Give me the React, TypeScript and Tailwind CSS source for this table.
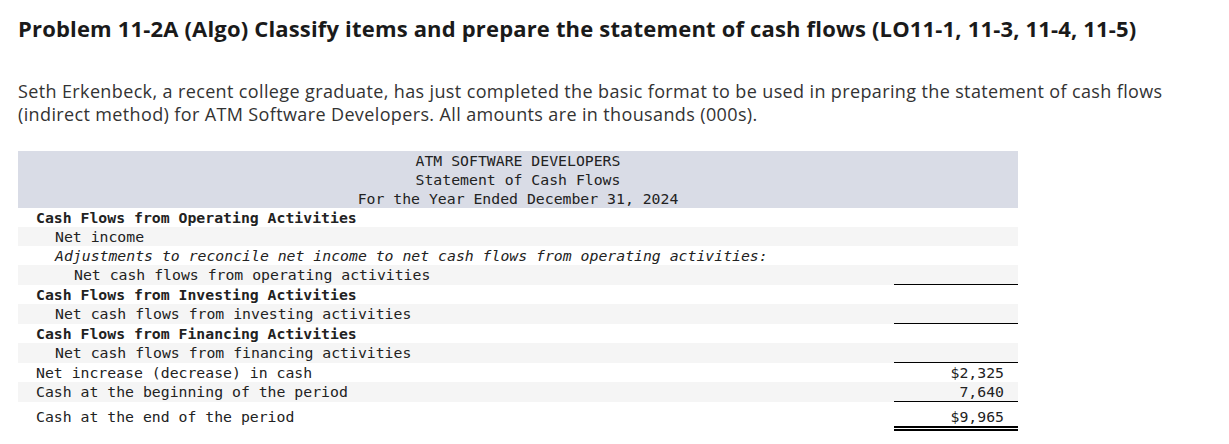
import React from 'react';

interface Row {
  label: string;
  level: number;
  bold?: boolean;
  italic?: boolean;
  amount?: string;
  rule?: 'single' | 'double';
}

const rows: Row[] = [
  { label: 'Cash Flows from Operating Activities', level: 0, bold: true },
  { label: 'Net income', level: 1 },
  { label: 'Adjustments to reconcile net income to net cash flows from operating activities:', level: 1, italic: true },
  { label: 'Net cash flows from operating activities', level: 2, rule: 'single' },
  { label: 'Cash Flows from Investing Activities', level: 0, bold: true },
  { label: 'Net cash flows from investing activities', level: 1, rule: 'single' },
  { label: 'Cash Flows from Financing Activities', level: 0, bold: true },
  { label: 'Net cash flows from financing activities', level: 1, rule: 'single' },
  { label: 'Net increase (decrease) in cash', level: 0, amount: '$2,325' },
  { label: 'Cash at the beginning of the period', level: 0, amount: '7,640', rule: 'single' },
  { label: 'Cash at the end of the period', level: 0, amount: '$9,965', rule: 'double' },
];

const indent = ['pl-[18px]', 'pl-[37px]', 'pl-[56px]'];

const App: React.FC = () => {
  return (
    <div className="w-[1229px] h-[444px] bg-white px-[18px] pt-[14px] text-[#333]">
      <h1 className="font-['Open_Sans','Lato',sans-serif] font-bold text-[22px] tracking-[0.17px] leading-[28px] text-[#1a1a1a]">
        Problem 11-2A (Algo) Classify items and prepare the statement of cash flows (LO11-1, 11-3, 11-4, 11-5)
      </h1>

      <p className="mt-[38px] w-[1180px] font-['Open_Sans','Lato',sans-serif] text-[18px] tracking-[0.37px] leading-[23px] text-[#333]">
        Seth Erkenbeck, a recent college graduate, has just completed the basic format to be used in preparing the statement of cash flows (indirect method) for ATM Software Developers. All amounts are in thousands (000s).
      </p>

      {/* statement */}
      <div className="mt-[25px] w-[1000px] font-['DejaVu_Sans_Mono','Liberation_Mono',monospace] text-[14.8px] text-[#222]">
        <div className="bg-[#d9dce6] h-[57px] flex flex-col items-center justify-center leading-[19px]">
          <div>ATM SOFTWARE DEVELOPERS</div>
          <div>Statement of Cash Flows</div>
          <div>For the Year Ended December 31, 2024</div>
        </div>

        {rows.map((r, i) => {
          const last = r.rule === 'double';
          return (
            <div
              key={i}
              className={`flex ${i % 2 === 1 ? 'bg-[#f5f5f5]' : 'bg-white'} ${last ? 'h-[29px]' : r.rule ? 'h-[20px]' : 'h-[19px]'}`}
            >
              <div
                className={`flex-1 ${indent[r.level]} whitespace-pre ${last ? 'pt-[5px]' : ''} leading-[19px] ${r.bold ? 'font-bold' : ''} ${r.italic ? 'italic' : ''}`}
              >
                {r.label}
              </div>
              <div
                className={`w-[124px] text-right pr-[14px] leading-[19px] ${last ? 'pt-[5px] border-b-[5px] border-double border-black' : ''} ${r.rule === 'single' ? 'border-b border-black' : ''}`}
              >
                {r.amount}
              </div>
            </div>
          );
        })}
      </div>
    </div>
  );
};

export default App;
